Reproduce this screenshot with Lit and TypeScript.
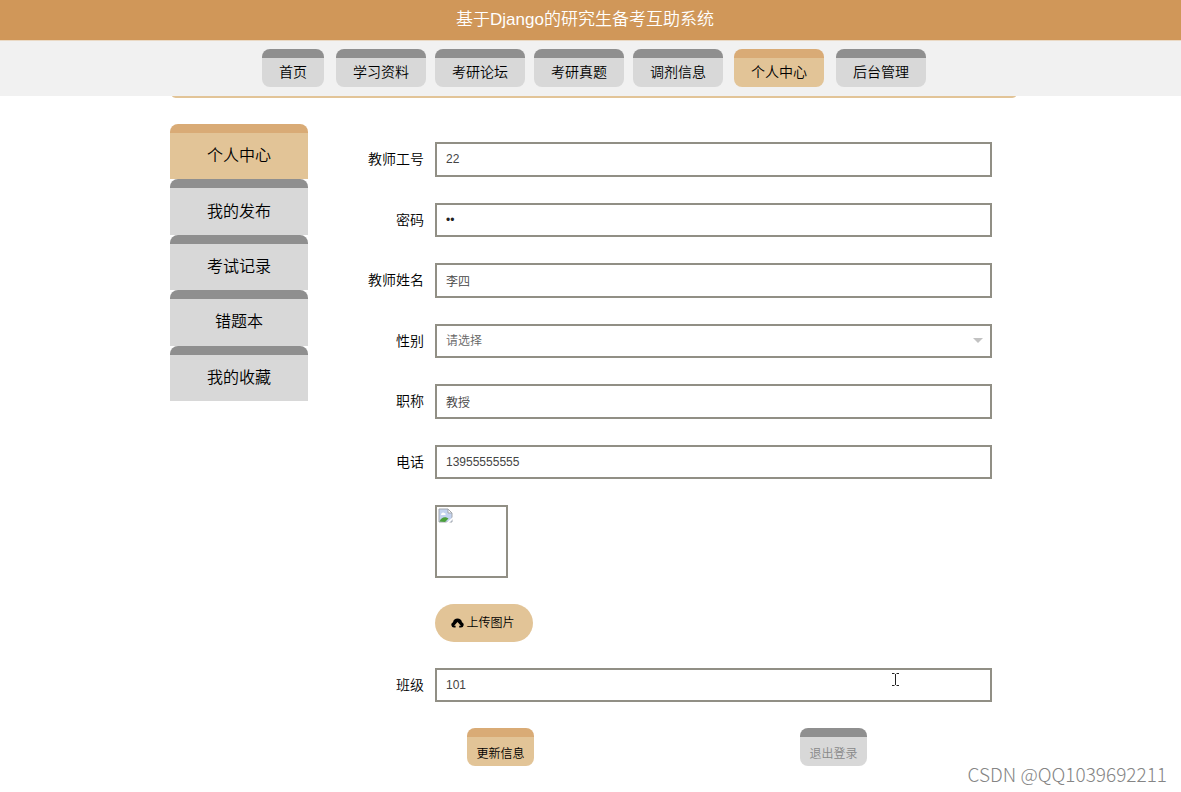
import { LitElement, html, css, svg } from "lit";
import { customElement, property, state } from "lit/decorators.js";

interface Field {
  id: string;
  label: string;
  value: string;
  type: "text" | "password" | "select";
}

const NAV = ["首页", "学习资料", "考研论坛", "考研真题", "调剂信息", "个人中心", "后台管理"];
const MENU = ["个人中心", "我的发布", "考试记录", "错题本", "我的收藏"];
const FIELDS: Field[] = [
  { id: "no", label: "教师工号", value: "22", type: "text" },
  { id: "pwd", label: "密码", value: "22", type: "password" },
  { id: "name", label: "教师姓名", value: "李四", type: "text" },
  { id: "sex", label: "性别", value: "", type: "select" },
  { id: "title", label: "职称", value: "教授", type: "text" },
  { id: "phone", label: "电话", value: "13955555555", type: "text" },
];
const CLASS_FIELD: Field = { id: "class", label: "班级", value: "101", type: "text" };

const missingPicture = svg`
  <path d="M1 1h9l4 4v9H1z" fill="#c3d3f0"/>
  <path d="M1 1h9l4 4v9H1z" fill="none" stroke="#a3a7ad"/>
  <path d="M10 1v4h4z" fill="#fff" stroke="#a3a7ad"/>
  <path d="M3 7c0-2 2-3 3-2 2 0 2 2 1 2z" fill="#fff"/>
  <path d="M1.5 13.5c1-3 4-5 7-4l2 1-3.5 3.5z" fill="#4ba03b"/>
  <path d="M8 15l7-6v2l-4 4z" fill="#fff"/>`;

@customElement("app-root")
export class AppRoot extends LitElement {
  @property() current = "个人中心";
  @state() private gender = "";

  static styles = css`
    :host {
      display: block;
      position: relative;
      min-height: 100vh;
      background: #fff;
      color: #000;
      font: 350 14px/20px "Liberation Sans", "Noto Sans CJK SC", sans-serif;
      --tan: linear-gradient(#d9ab76 9px, #e2c497 9px);
      --grey: linear-gradient(#8f8f8f 9px, #d8d8d8 9px);
    }
    * {
      box-sizing: border-box;
    }
    a {
      color: inherit;
      text-decoration: none;
    }
    .title {
      margin: 0;
      padding: 0 11px 0 0;
      background: #d09759;
      color: #fff;
      font-size: 17px;
      font-weight: 350;
      line-height: 40px;
      text-align: center;
    }
    .nav {
      display: flex;
      justify-content: center;
      gap: 9px;
      padding: 8px 0 9px 7px;
      border-top: 1px solid #ead9c4;
      background: #f1f1f1;
      height: 56px;
    }
    .nav a {
      height: 38px;
      padding: 13px 17px 0;
      border-radius: 8px;
      background: var(--grey);
    }
    .nav a:first-child {
      margin-right: 3px;
    }
    .nav .active {
      margin: 0 3px 0 2px;
      background: var(--tan);
    }
    .page {
      padding-left: 7px;
    }
    .wrap {
      max-width: 848px;
      margin: 0 auto;
    }
    .strip {
      height: 2px;
      margin: 0 2px 26px;
      background: #e2c497;
      border-radius: 0 0 6px 6px / 0 0 2px 2px;
    }
    .columns {
      display: flex;
      align-items: flex-start;
    }
    .menu {
      flex: 0 0 138px;
      display: grid;
      grid-auto-rows: 1fr;
      min-height: 277px;
      font-size: 16px;
    }
    .menu a {
      display: flex;
      align-items: center;
      justify-content: center;
      padding-top: 9px;
      border-radius: 8px 8px 0 0;
      background: var(--grey);
    }
    .menu .active {
      background: var(--tan);
    }
    form {
      flex: 1;
      min-width: 0;
      display: grid;
      gap: 26px;
      margin: 18px 18px 0 26px;
    }
    .fields {
      display: grid;
      grid-auto-rows: 1fr;
      gap: 26px;
      min-height: 337px;
    }
    .row {
      display: grid;
      grid-template-columns: 101px 1fr;
      align-items: center;
      padding-right: 8px;
    }
    .row label {
      padding-right: 11px;
      text-align: right;
    }
    .control {
      position: relative;
      display: grid;
      height: 100%;
      min-height: 34px;
    }
    input,
    select {
      width: 100%;
      min-width: 0;
      margin: 0;
      padding: 0 9px;
      border: 2px solid #918f85;
      border-radius: 0;
      background: #fff;
      color: #444;
      font: 350 12px "Liberation Sans", "Noto Sans CJK SC", sans-serif;
      outline: none;
      appearance: none;
    }
    input[type="password"] {
      font-size: 12px;
      color: #222;
    }
    select {
      color: #666;
    }
    .arrow {
      position: absolute;
      right: 9px;
      top: 14px;
      border: 5px solid transparent;
      border-top-color: #c2c2c2;
      border-bottom: 0;
      pointer-events: none;
    }
    .inset {
      padding-left: 101px;
    }
    .photo {
      width: 73px;
      height: 73px;
      padding: 1px;
      border: 2px solid #918f85;
    }
    .photo svg {
      display: block;
    }
    button {
      border: 0;
      margin: 0;
      color: #000;
      font: 350 12px/18px "Liberation Sans", "Noto Sans CJK SC", sans-serif;
    }
    .upload {
      display: flex;
      align-items: center;
      justify-content: center;
      gap: 2px;
      width: 98px;
      height: 38px;
      padding: 0 2px 0 0;
      border-radius: 19px;
      background: #e2c497;
    }
    .actions {
      display: flex;
      justify-content: space-around;
    }
    .actions button {
      width: 67px;
      height: 38px;
      padding: 13px 0 0;
      border-radius: 8px;
      background: var(--tan);
    }
    .actions .logout {
      background: var(--grey);
      color: #888;
    }
    .cursor {
      position: absolute;
      right: 92px;
      top: 4px;
    }
    .mark {
      position: absolute;
      right: 14px;
      bottom: 8px;
      color: #858585;
      font: 300 19px/20px "Noto Sans CJK SC", sans-serif;
    }
  `;

  private field(f: Field, extra: unknown = null) {
    return html`<div class="row">
      <label for=${f.id}>${f.label}</label>
      <div class="control">
        ${f.type === "select"
          ? html`<select
                id=${f.id}
                .value=${this.gender}
                @change=${(e: Event) => (this.gender = (e.target as HTMLSelectElement).value)}
              >
                <option value="">请选择</option>
                <option value="男">男</option>
                <option value="女">女</option>
              </select>
              <span class="arrow"></span>`
          : html`<input id=${f.id} type=${f.type} .value=${f.value} autocomplete="off" />`}
        ${extra}
      </div>
    </div>`;
  }

  private link(text: string) {
    return html`<a href="#" class=${text === this.current ? "active" : ""}>${text}</a>`;
  }

  render() {
    const cursor = html`<svg class="cursor" width="9" height="15" viewBox="0 0 9 15" aria-hidden="true">
      <path d="M1 1.5h2.5M5.5 1.5H8M4.5 2v11M1 13.5h2.5M5.5 13.5H8" fill="none" stroke="#222" />
    </svg>`;
    return html`
      <header>
        <h1 class="title">基于Django的研究生备考互助系统</h1>
        <nav class="nav">${NAV.map((t) => this.link(t))}</nav>
      </header>
      <main class="page">
        <div class="wrap">
          <div class="strip"></div>
          <div class="columns">
            <nav class="menu">${MENU.map((t) => this.link(t))}</nav>
            <form @submit=${(e: Event) => e.preventDefault()}>
              <div class="fields">${FIELDS.map((f) => this.field(f))}</div>
              <div class="inset">
                <div class="photo">
                  <svg width="16" height="16" viewBox="0 0 16 16" role="img">${missingPicture}</svg>
                </div>
              </div>
              <div class="inset">
                <button type="button" class="upload">
                  <svg width="13" height="10" viewBox="0 0 13 10" aria-hidden="true">
                    <path
                      d="M3.6 9.4H3A2.7 2.7 0 0 1 2 4.2 4.6 4.6 0 0 1 11 4.2 2.7 2.7 0 0 1 10 9.4H8.2V7.8H9.9L6.5 4 3.1 7.8H4.6V9.4z"
                      fill="#000"
                    />
                  </svg>
                  上传图片
                </button>
              </div>
              ${this.field(CLASS_FIELD, cursor)}
              <div class="actions">
                <button type="submit">更新信息</button>
                <button type="button" class="logout">退出登录</button>
              </div>
            </form>
          </div>
        </div>
      </main>
      <div class="mark">CSDN @QQ1039692211</div>
    `;
  }
}
